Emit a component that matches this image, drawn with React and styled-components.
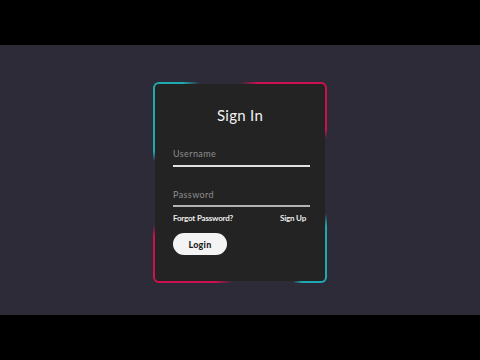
import styled, { createGlobalStyle } from 'styled-components'

const GlobalStyle = createGlobalStyle`
  html, body {
    margin: 0;
    padding: 0;
    background: #000;
  }
  body {
    font-family: 'Lato', 'Open Sans', sans-serif;
  }
`

const cyan = '#1fa8b0'
const red = '#cc1150'

const Page = styled.div`
  width: 480px;
  height: 360px;
  padding: 45px 0;
  box-sizing: border-box;
  background: #000;
`

const Stage = styled.main`
  height: 270px;
  box-sizing: border-box;
  padding-top: 37px;
  background: #2d2b38;
  display: flex;
  justify-content: center;
  align-items: flex-start;
`

const Frame = styled.div`
  width: 174px;
  padding: 2px;
  box-sizing: border-box;
  border-radius: 6px;
  background: conic-gradient(
    from 0deg at 50% 50%,
    transparent 0deg,
    ${red} 10deg,
    ${red} 58deg,
    transparent 63deg,
    transparent 110deg,
    ${cyan} 117deg,
    ${cyan} 148deg,
    transparent 152deg,
    transparent 184deg,
    ${red} 194deg,
    ${red} 238deg,
    transparent 244deg,
    transparent 284deg,
    ${cyan} 290deg,
    ${cyan} 330deg,
    transparent 338deg
  );
`

const Card = styled.form`
  height: 197px;
  box-sizing: border-box;
  padding: 22px 15px 0 18px;
  border-radius: 4px;
  background: #232323;
  display: flex;
  flex-direction: column;
  align-items: flex-start;
`

const Title = styled.h2`
  align-self: stretch;
  margin: 0 0 20px -3px;
  font-size: 15px;
  line-height: 18px;
  font-weight: 400;
  color: #f2f2f2;
  text-align: center;
  letter-spacing: 0.3px;
`

const Field = styled.input`
  width: 137px;
  height: 23px;
  box-sizing: border-box;
  margin: 0 0 ${(p) => p.$after}px 0;
  padding: 0 0 ${(p) => p.$lift}px 0;
  border: none;
  border-bottom: 2px solid ${(p) => p.$line};
  background: transparent;
  outline: none;
  font: inherit;
  font-size: 9px;
  letter-spacing: 0.4px;
  color: #ddd;

  &::placeholder {
    color: #8e8e8e;
  }
`

const Links = styled.div`
  width: 133px;
  margin-bottom: 10px;
  display: flex;
  justify-content: space-between;
`

const SmallLink = styled.a`
  font-size: 8px;
  line-height: 10px;
  font-weight: 700;
  letter-spacing: -0.2px;
  color: #ececec;
  text-decoration: none;
  cursor: pointer;
`

const LoginButton = styled.button`
  width: 54px;
  height: 22px;
  border: none;
  border-radius: 11px;
  background: #f4f4f4;
  color: #1e1e1e;
  font: inherit;
  font-size: 9px;
  font-weight: 900;
  letter-spacing: 0.2px;
  cursor: pointer;
`

export default function App() {
  return (
    <>
      <GlobalStyle />
      <Page>
        <Stage>
          <Frame>
            <Card onSubmit={(e) => e.preventDefault()}>
              <Title>Sign In</Title>
              <Field
                placeholder="Username"
                $line="#e2e2e2"
                $lift={3}
                $after={17}
              />
              <Field
                type="password"
                placeholder="Password"
                $line="#b4b4b4"
                $lift={1}
                $after={6}
              />
              <Links>
                <SmallLink>Forgot Password?</SmallLink>
                <SmallLink>Sign Up</SmallLink>
              </Links>
              <LoginButton type="submit">Login</LoginButton>
            </Card>
          </Frame>
        </Stage>
      </Page>
    </>
  )
}
